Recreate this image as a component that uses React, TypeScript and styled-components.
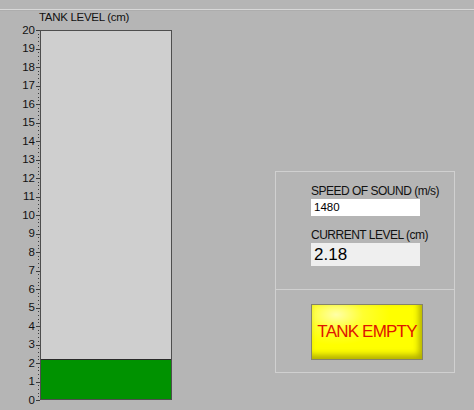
import styled, { createGlobalStyle } from "styled-components"

const GlobalStyle = createGlobalStyle`
  html, body {
    margin: 0;
    padding: 0;
    background: #b5b5b5;
  }
  body {
    font-family: "Liberation Sans", Arial, sans-serif;
    color: #000;
  }
`

const MAX = 20
const LEVEL = 2.18
const TANK_H = 370
const UNIT = TANK_H / MAX

const Page = styled.div`
  width: 474px;
  height: 410px;
  overflow: hidden;
  display: flex;
  flex-direction: column;
`

const TopRule = styled.div`
  margin-top: 9px;
  height: 1px;
  background: #d8d8d8;
  border-bottom: 1px solid #adadad;
`

const Main = styled.div`
  display: flex;
  align-items: flex-start;
`

const Gauge = styled.div`
  display: flex;
  flex-direction: column;
`

const GaugeTitle = styled.div`
  height: 19px;
  line-height: 13px;
  padding-left: 39px;
  font-size: 11.5px;
  letter-spacing: -0.3px;
  white-space: nowrap;
  color: #111;
`

const GaugeBody = styled.div`
  display: flex;
`

const Scale = styled.div`
  position: relative;
  width: 40px;
  height: ${TANK_H}px;
`

const Labels = styled.div`
  display: flex;
  flex-direction: column;
  margin-top: -${UNIT / 2}px;
  width: 35px;
`

const Label = styled.div`
  height: ${UNIT}px;
  line-height: ${UNIT}px;
  text-align: right;
  font-size: 11.5px;
  color: #111;
`

const Ticks = styled.svg`
  position: absolute;
  left: 35px;
  top: 0;
`

const Tank = styled.div`
  width: 130px;
  height: ${TANK_H - 2}px;
  border: 1px solid #4e4e4e;
  background: #cfcfcf;
  display: flex;
  flex-direction: column;
  justify-content: flex-end;
`

const Fill = styled.div`
  background: #009200;
  border-top: 1px solid #2a2a2a;
`

const Panel = styled.div`
  margin-top: 160px;
  margin-left: 103px;
  width: 178px;
  border: 1px solid #d0d0d0;
  display: flex;
  flex-direction: column;
`

const Section = styled.div<{ $h: number; $top: number }>`
  height: ${(p) => p.$h}px;
  box-sizing: border-box;
  padding: ${(p) => p.$top}px 0 0 35px;
  display: flex;
  flex-direction: column;
  & + & {
    border-top: 1px solid #d0d0d0;
  }
`

const FieldLabel = styled.div<{ $gap: number }>`
  font-size: 12px;
  line-height: 14px;
  letter-spacing: -0.5px;
  margin-top: ${(p) => p.$gap}px;
  white-space: nowrap;
  color: #111;
`

const Control = styled.div`
  margin-top: 1px;
  width: 106px;
  height: 17px;
  background: #fff;
  font-size: 11.5px;
  line-height: 17px;
  padding-left: 3px;
`

const Indicator = styled.div`
  margin-top: 1px;
  width: 106px;
  height: 23px;
  background: #efefef;
  font-size: 17px;
  line-height: 23px;
  padding-left: 3px;
`

const Alarm = styled.div`
  width: 110px;
  height: 54px;
  border: 1px solid #85836a;
  background: radial-gradient(
    ellipse 70% 80% at 22% 18%,
    #ffffa8 0%,
    #ffff30 35%,
    #ffff00 70%
  ),
  #ffff00;
  box-shadow: inset -3px -4px 6px rgba(110, 105, 0, 0.55);
  display: flex;
  align-items: center;
  justify-content: center;
  color: #e01400;
  font-size: 17px;
  letter-spacing: -0.8px;
`

const labels = Array.from({ length: MAX + 1 }, (_, i) => MAX - i)

const ScaleTicks = () => {
  const lines = []
  for (let i = 0; i <= MAX * 5; i++) {
    const y = Math.round(i * (UNIT / 5)) + 0.5
    const major = i % 5 === 0
    lines.push(
      <line
        key={i}
        x1={major ? 1 : 3}
        x2={5}
        y1={y}
        y2={y}
        stroke="#3a3a3a"
        strokeWidth={1}
        strokeDasharray={major ? undefined : "1 1"}
      />
    )
  }
  return (
    <Ticks width={5} height={TANK_H + 1}>
      {lines}
    </Ticks>
  )
}

export default function App() {
  return (
    <Page>
      <GlobalStyle />
      <TopRule />
      <Main>
        <Gauge>
          <GaugeTitle>TANK LEVEL (cm)</GaugeTitle>
          <GaugeBody>
            <Scale>
              <Labels>
                {labels.map((n) => (
                  <Label key={n}>{n}</Label>
                ))}
              </Labels>
              <ScaleTicks />
            </Scale>
            <Tank>
              <Fill style={{ height: Math.round(LEVEL * UNIT) - 1 }} />
            </Tank>
          </GaugeBody>
        </Gauge>
        <Panel>
          <Section $h={117} $top={12}>
            <FieldLabel $gap={0}>SPEED OF SOUND (m/s)</FieldLabel>
            <Control>1480</Control>
            <FieldLabel $gap={12}>CURRENT LEVEL (cm)</FieldLabel>
            <Indicator>2.18</Indicator>
          </Section>
          <Section $h={83} $top={14}>
            <Alarm>TANK EMPTY</Alarm>
          </Section>
        </Panel>
      </Main>
    </Page>
  )
}
